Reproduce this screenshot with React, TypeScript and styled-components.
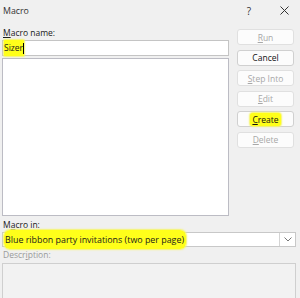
import React from 'react'
import styled, { createGlobalStyle } from 'styled-components'

const GlobalStyle = createGlobalStyle`
  html, body {
    margin: 0;
    padding: 0;
    background: #f0f0f0;
  }
`

const Window = styled.div`
  width: 300px;
  height: 298px;
  background: #f0f0f0;
  font-family: 'Open Sans', 'Noto Sans', sans-serif;
  font-size: 8.5px;
  color: #1a1a1a;
  overflow: hidden;
  display: flex;
  flex-direction: column;
`

const TitleBar = styled.div`
  height: 21px;
  flex-shrink: 0;
  display: flex;
  align-items: center;
  padding: 0 11px 0 3px;
  font-size: 8.8px;
  color: #333;
`

const Title = styled.div`
  flex: 1;
`

const TitleIcon = styled.div<{ $gap?: number }>`
  width: 10px;
  display: flex;
  justify-content: center;
  margin-left: ${p => p.$gap ?? 0}px;
  font-size: 10px;
`

const Body = styled.div`
  flex: 1;
  display: flex;
  flex-direction: column;
  padding: 0 4px 0 2px;
`

const Top = styled.div`
  display: flex;
  gap: 8px;
`

const LeftCol = styled.div`
  width: 227px;
  display: flex;
  flex-direction: column;
`

const RightCol = styled.div`
  width: 57px;
  padding-top: 8px;
  display: flex;
  flex-direction: column;
  gap: 4.6px;
`

const Label = styled.div<{ $disabled?: boolean; $top?: number; $bottom?: number }>`
  height: 12px;
  flex-shrink: 0;
  line-height: 12px;
  padding-left: 1px;
  margin: ${p => p.$top ?? 0}px 0 ${p => p.$bottom ?? 0}px;
  color: ${p => (p.$disabled ? '#9a9a9a' : '#1a1a1a')};
`

const Key = styled.span`
  text-decoration: underline;
  text-underline-offset: 1px;
`

const TextInput = styled.div`
  height: 16px;
  flex-shrink: 0;
  box-sizing: border-box;
  background: #fff;
  border: 1px solid #c4c4c4;
  display: flex;
  align-items: center;
  padding-left: 1px;
`

const Highlight = styled.span<{ $radius?: number; $pad?: string }>`
  background: #ffff1a;
  padding: ${p => p.$pad ?? '0'};
  border-radius: ${p => p.$radius ?? 1}px;
  box-shadow: 0 0 1.5px 1px #f6f56a;
`

const Caret = styled.span`
  display: inline-block;
  width: 1px;
  height: 11px;
  background: #000;
  vertical-align: middle;
`

const ListBox = styled.div`
  margin-top: 2px;
  height: 158px;
  flex-shrink: 0;
  box-sizing: border-box;
  background: #fff;
  border: 1.5px solid #bcbcc4;
`

const Button = styled.div<{ $disabled?: boolean }>`
  height: 16px;
  flex-shrink: 0;
  box-sizing: border-box;
  background: #fcfcfc;
  border: 1px solid ${p => (p.$disabled ? '#e0e0e0' : '#d0d0d0')};
  border-radius: 3px;
  display: flex;
  align-items: center;
  justify-content: center;
  color: ${p => (p.$disabled ? '#a8a8a8' : '#111')};
`

const Select = styled.div`
  height: 15px;
  flex-shrink: 0;
  box-sizing: border-box;
  background: #fff;
  border: 1px solid #c8c8c8;
  display: flex;
  align-items: center;
`

const SelectText = styled.div`
  flex: 1;
  padding-left: 1px;
  white-space: nowrap;
  font-size: 8.9px;
`

const SelectArrow = styled.div`
  width: 15px;
  height: 100%;
  border-left: 1px solid #d4d4d4;
  display: flex;
  align-items: center;
  justify-content: center;
`

const Description = styled.div`
  height: 37px;
  flex-shrink: 0;
  box-sizing: border-box;
  background: #f2f2f2;
  border: 1px solid #cfcfcf;
`

export default function App() {
  return (
    <>
      <GlobalStyle />
      <Window>
        <TitleBar>
          <Title>Macro</Title>
          <TitleIcon>?</TitleIcon>
          <TitleIcon $gap={25}>
            <svg width="9" height="9" viewBox="0 0 9 9">
              <path d="M0.5 0.5 L8.5 8.5 M8.5 0.5 L0.5 8.5" stroke="#333" strokeWidth="1" />
            </svg>
          </TitleIcon>
        </TitleBar>
        <Body>
          <Top>
            <LeftCol>
              <Label $top={6} $bottom={1}>
                <Key>M</Key>acro name:
              </Label>
              <TextInput>
                <Highlight $pad="2px 0 2px 0">
                  Sizer<Caret />
                </Highlight>
              </TextInput>
              <ListBox />
            </LeftCol>
            <RightCol>
              <Button $disabled>
                <Key>R</Key>un
              </Button>
              <Button>Cancel</Button>
              <Button $disabled>
                <Key>S</Key>tep Into
              </Button>
              <Button $disabled>
                <Key>E</Key>dit
              </Button>
              <Button>
                <Highlight $radius={3} $pad="1px 2px">
                  <Key>C</Key>reate
                </Highlight>
              </Button>
              <Button $disabled>
                <Key>D</Key>elete
              </Button>
            </RightCol>
          </Top>
          <Label $top={3} $bottom={1}>
            M<Key>a</Key>cro in:
          </Label>
          <Select>
            <SelectText>
              <Highlight $radius={6} $pad="3px 2px 3px 1px">
                Blue ribbon party invitations (two per page)
              </Highlight>
            </SelectText>
            <SelectArrow>
              <svg width="8" height="5" viewBox="0 0 8 5">
                <path d="M0.5 0.5 L4 4 L7.5 0.5" stroke="#777" strokeWidth="1" fill="none" />
              </svg>
            </SelectArrow>
          </Select>
          <Label $disabled $top={2} $bottom={2}>
            Descr<Key>i</Key>ption:
          </Label>
          <Description />
        </Body>
      </Window>
    </>
  )
}
